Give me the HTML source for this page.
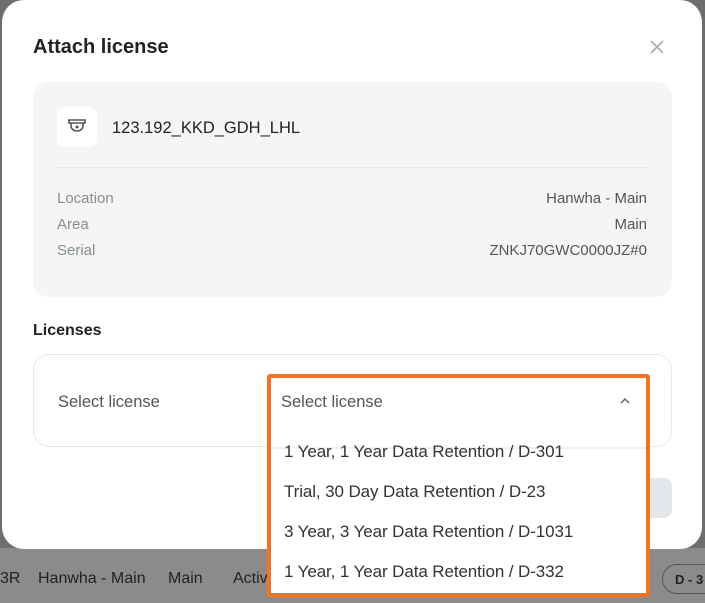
<!DOCTYPE html>
<html><head><style>
*{margin:0;padding:0;box-sizing:border-box}
body{width:705px;height:603px;overflow:hidden;background:#6e6e6e;font-family:"Liberation Sans",sans-serif;position:relative}
.abs{position:absolute}
.bar{left:0;top:548px;width:705px;height:55px;background:#8b8b8b;color:#222;font-size:16px}
.modal{left:2px;top:0;width:700px;height:549px;background:#fff;border-radius:22px}
.card{left:33px;top:82px;width:639px;height:215px;background:#f4f5f5;border-radius:16px}
.lbl{color:#8a8d90;font-size:15px}
.val{color:#555;font-size:15px;right:58px;text-align:right}
.opt{left:284px;font-size:17px;color:#333;letter-spacing:-0.1px}
</style></head><body>
<div class="abs bar">
 <span class="abs" style="left:0;top:22px">3R</span>
 <span class="abs" style="left:38px;top:22px">Hanwha - Main</span>
 <span class="abs" style="left:168px;top:22px">Main</span>
 <span class="abs" style="left:233px;top:22px">Activ</span>
 <div class="abs" style="left:662px;top:16px;width:60px;height:30px;border:1px solid #555;border-radius:15px;font-size:13px;font-weight:bold;padding:7px 12px">D - 3</div>
</div>
<div class="abs modal"></div>
<div class="abs" style="left:33px;top:36px;font-size:20px;font-weight:bold;color:#222">Attach license</div>
<svg class="abs" style="left:649px;top:39px" width="16" height="16" viewBox="0 0 16 16"><path d="M2 2L14 14M14 2L2 14" stroke="#aaa" stroke-width="1.6"/></svg>
<div class="abs card"></div>
<div class="abs" style="left:57px;top:107px;width:40px;height:40px;background:#fff;border-radius:8px"></div>
<svg class="abs" style="left:66px;top:117px" width="22" height="20" viewBox="0 0 22 20"><path d="M2 3H20M3 3V6H19V3M5 6V9A6 5 0 0 0 17 9V6" fill="none" stroke="#555" stroke-width="1.6"/><circle cx="11" cy="10" r="1.5" fill="#555"/></svg>
<div class="abs" style="left:112px;top:119px;font-size:16.5px;color:#222">123.192_KKD_GDH_LHL</div>
<div class="abs" style="left:57px;top:167px;width:590px;height:1px;background:#e3e5e8"></div>
<div class="abs lbl" style="left:57px;top:190px">Location</div>
<div class="abs lbl" style="left:57px;top:216px">Area</div>
<div class="abs lbl" style="left:57px;top:242px">Serial</div>
<div class="abs val" style="top:190px">Hanwha - Main</div>
<div class="abs val" style="top:216px">Main</div>
<div class="abs val" style="top:242px">ZNKJ70GWC0000JZ#0</div>
<div class="abs" style="left:33px;top:322px;font-size:16px;font-weight:bold;color:#222">Licenses</div>
<div class="abs" style="left:33px;top:354px;width:639px;height:93px;border:1px solid #e6e9ec;border-radius:16px"></div>
<div class="abs" style="left:58px;top:393px;font-size:16.5px;color:#555">Select license</div>
<div class="abs" style="left:640px;top:478px;width:32px;height:40px;background:#e4e7ea;border-radius:8px"></div>
<div class="abs" style="left:267px;top:374px;width:383px;height:223px;border:4px solid #f07422;border-radius:3px;background:#fff"></div>
<div class="abs" style="left:281px;top:393px;font-size:16.5px;color:#555">Select license</div>
<svg class="abs" style="left:619px;top:397px" width="12" height="8" viewBox="0 0 12 8"><path d="M2 6L6 2L10 6" fill="none" stroke="#666" stroke-width="1.5"/></svg>
<div class="abs" style="left:271px;top:447px;width:375px;height:2px;background:#eef0f2"></div>
<div class="abs opt" style="top:442px">1 Year, 1 Year Data Retention / D-301</div>
<div class="abs opt" style="top:482px">Trial, 30 Day Data Retention / D-23</div>
<div class="abs opt" style="top:522px">3 Year, 3 Year Data Retention / D-1031</div>
<div class="abs opt" style="top:562px">1 Year, 1 Year Data Retention / D-332</div>
</body></html>
